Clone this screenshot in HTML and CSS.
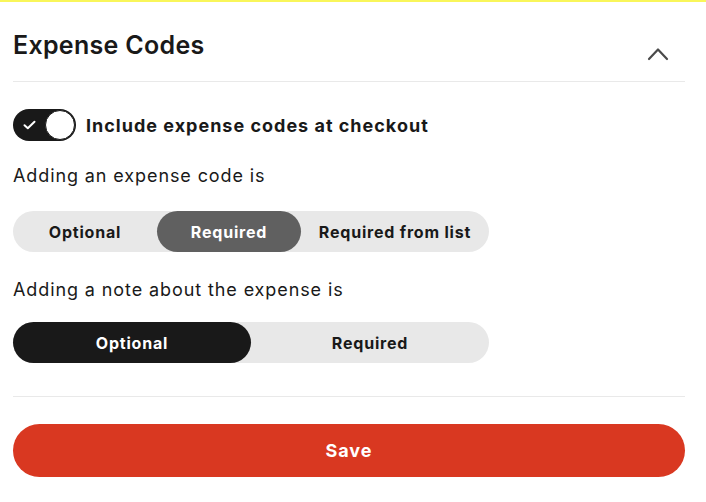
FILE: index.html
```html
<!DOCTYPE html>
<html>
<head>
    <meta charset="UTF-8">
    <title>Expense Codes</title>
    <link rel="stylesheet" href="styles.css">
</head>
<body>
    <div class="panel">
        <div class="panel-header">
            <h2>Expense Codes</h2>
            <svg class="chevron" width="22" height="14" viewBox="0 0 22 14">
                <path d="M2 12 L11 2.5 L20 12" fill="none" stroke="#4a4a4a" stroke-width="2.2" stroke-linecap="round" stroke-linejoin="round"/>
            </svg>
        </div>

        <div class="panel-body">
            <label class="toggle-row">
                <span class="toggle is-on">
                    <svg class="toggle-check" width="13" height="10" viewBox="0 0 13 10">
                        <path d="M1.5 5.2 L4.8 8.2 L11.5 1.8" fill="none" stroke="#fff" stroke-width="2" stroke-linecap="round" stroke-linejoin="round"/>
                    </svg>
                    <span class="toggle-knob"></span>
                </span>
                <span class="toggle-label">Include expense codes at checkout</span>
            </label>

            <p class="field-label">Adding an expense code is</p>
            <div class="segmented segmented-three">
                <button>Optional</button>
                <button class="is-selected-grey">Required</button>
                <button>Required from list</button>
            </div>

            <p class="field-label field-label-note">Adding a note about the expense is</p>
            <div class="segmented segmented-two">
                <button class="is-selected">Optional</button>
                <button>Required</button>
            </div>
        </div>

        <div class="panel-footer">
            <button class="save-button">Save</button>
        </div>
    </div>
</body>
</html>
```

FILE: styles.css
```css
body {
    margin: 0;
    font-family: Inter, "Noto Sans", sans-serif;
    color: #191919;
    background-color: white;
    border-top: 2px solid #f9f65a;
}

.panel {
    padding: 0 21px 0 13px;
}

.panel-header {
    display: flex;
    justify-content: space-between;
    align-items: center;
    height: 79px;
    border-bottom: 1px solid #e9e9e9;
}

.panel-header h2 {
    margin: 6px 0 0 0;
    font-size: 25px;
    font-weight: 600;
    letter-spacing: 0.3px;
}

.chevron {
    margin: 24px 16px 0 0;
}

.panel-body {
    padding: 27px 0 33px;
    border-bottom: 1px solid #e9e9e9;
}

.toggle-row {
    display: flex;
    align-items: center;
    gap: 10px;
}

.toggle {
    position: relative;
    display: flex;
    align-items: center;
    width: 63px;
    height: 32px;
    border-radius: 16px;
    background-color: #191919;
}

.toggle-check {
    margin-left: 10px;
}

.toggle-knob {
    position: absolute;
    right: 1px;
    top: 1px;
    width: 30px;
    height: 30px;
    border-radius: 50%;
    background-color: white;
    box-sizing: border-box;
    border: 1.5px solid #191919;
}

.toggle-label {
    font-size: 18px;
    font-weight: 700;
    letter-spacing: 1px;
}

.field-label {
    margin: 23px 0 0 0;
    font-size: 18px;
    line-height: 24px;
    letter-spacing: 0.9px;
}

.field-label-note {
    margin-top: 26px;
}

.segmented {
    display: grid;
    width: 476px;
    height: 41px;
    margin-top: 23px;
    border-radius: 21px;
    background-color: #e8e8e8;
}

.field-label-note + .segmented {
    margin-top: 20px;
}

.segmented-three {
    grid-template-columns: 144px 144px 1fr;
}

.segmented-two {
    grid-template-columns: 1fr 1fr;
}

.segmented button {
    border: 0;
    background: none;
    border-radius: 21px;
    font-family: inherit;
    font-size: 16px;
    font-weight: 700;
    letter-spacing: 0.8px;
    color: #191919;
    padding: 0;
}

.segmented button.is-selected-grey {
    background-color: #606060;
    color: white;
}

.segmented button.is-selected {
    background-color: #191919;
    color: white;
}

.panel-footer {
    padding-top: 27px;
}

.save-button {
    display: block;
    width: 100%;
    height: 53px;
    border: 0;
    border-radius: 27px;
    background-color: #d93821;
    color: white;
    font-family: inherit;
    font-size: 18px;
    font-weight: 700;
    letter-spacing: 1px;
}
```
